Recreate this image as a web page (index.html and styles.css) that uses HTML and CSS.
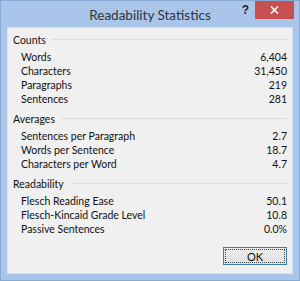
FILE: index.html
```html
<!DOCTYPE html>
<html lang="en">
<head>
  <meta charset="UTF-8">
  <title>Readability Statistics</title>
  <meta name="viewport" content="width=device-width, initial-scale=1.0">
  <link rel="stylesheet" href="styles.css">
</head>
<body>
  <div class="window">
    <div class="titlebar">
      <span class="title">Readability Statistics</span>
      <span class="help">?</span>
      <span class="close">
        <svg width="9" height="8" viewBox="0 0 9 8">
          <path d="M1 0.5 L8 7.5 M8 0.5 L1 7.5" stroke="#fff" stroke-width="1.6"/>
        </svg>
      </span>
    </div>

    <div class="client">
      <div class="group">
        <div class="group-head"><span>Counts</span></div>
        <div class="row"><span>Words</span><span>6,404</span></div>
        <div class="row"><span>Characters</span><span>31,450</span></div>
        <div class="row"><span>Paragraphs</span><span>219</span></div>
        <div class="row"><span>Sentences</span><span>281</span></div>
      </div>

      <div class="group">
        <div class="group-head"><span>Averages</span></div>
        <div class="row"><span>Sentences per Paragraph</span><span>2.7</span></div>
        <div class="row"><span>Words per Sentence</span><span>18.7</span></div>
        <div class="row"><span>Characters per Word</span><span>4.7</span></div>
      </div>

      <div class="group">
        <div class="group-head"><span>Readability</span></div>
        <div class="row"><span>Flesch Reading Ease</span><span>50.1</span></div>
        <div class="row"><span>Flesch-Kincaid Grade Level</span><span>10.8</span></div>
        <div class="row"><span>Passive Sentences</span><span>0.0%</span></div>
      </div>

      <div class="buttons">
        <button class="ok"><span>OK</span></button>
      </div>
    </div>
  </div>
</body>
</html>
```

FILE: styles.css
```css
body {
  margin: 0;
  font-family: Lato, "Open Sans", sans-serif;
  font-size: 10.5px;
  color: #111;
}
.window {
  box-sizing: border-box;
  width: 300px;
  height: 281px;
  background: #a9c6ea;
  border: 1px solid #88a9d4;
  padding: 0 6px 6px 6px;
  display: flex;
  flex-direction: column;
}
.titlebar {
  height: 26px;
  display: flex;
  align-items: flex-start;
  justify-content: center;
  position: relative;
}
.title {
  font-size: 13.5px;
  color: #333;
  line-height: 28px;
}
.help {
  position: absolute;
  right: 44px;
  top: 2px;
  font-family: "Liberation Sans", sans-serif;
  font-weight: bold;
  font-size: 12px;
  color: #222;
}
.close {
  position: absolute;
  right: -1px;
  top: 0;
  width: 39px;
  height: 18px;
  background: #c75050;
  display: flex;
  align-items: center;
  justify-content: center;
}
.client {
  flex: 1;
  background: #f0f0f0;
  border: 1px solid #d5e2f2;
  padding: 1px 5px 8px 5px;
  display: flex;
  flex-direction: column;
}
.group {
  margin-bottom: 2px;
}
.group-head {
  height: 21px;
  display: flex;
  align-items: center;
  gap: 6px;
}
.group-head::after {
  content: "";
  flex: 1;
  height: 1px;
  background: #dcdcdc;
}
.row {
  height: 14px;
  line-height: 14px;
  display: flex;
  justify-content: space-between;
  padding-left: 8px;
}
.buttons {
  margin-top: auto;
  display: flex;
  justify-content: flex-end;
}
.ok {
  width: 64px;
  height: 18px;
  padding: 1px;
  border: 1px solid #3c7fb1;
  background: linear-gradient(#ececec, #e0e0e0);
  font-family: inherit;
  font-size: 11px;
  color: #111;
}
.ok span {
  display: block;
  height: 100%;
  line-height: 14px;
  border: 1px dotted #444;
  box-sizing: border-box;
}
```
